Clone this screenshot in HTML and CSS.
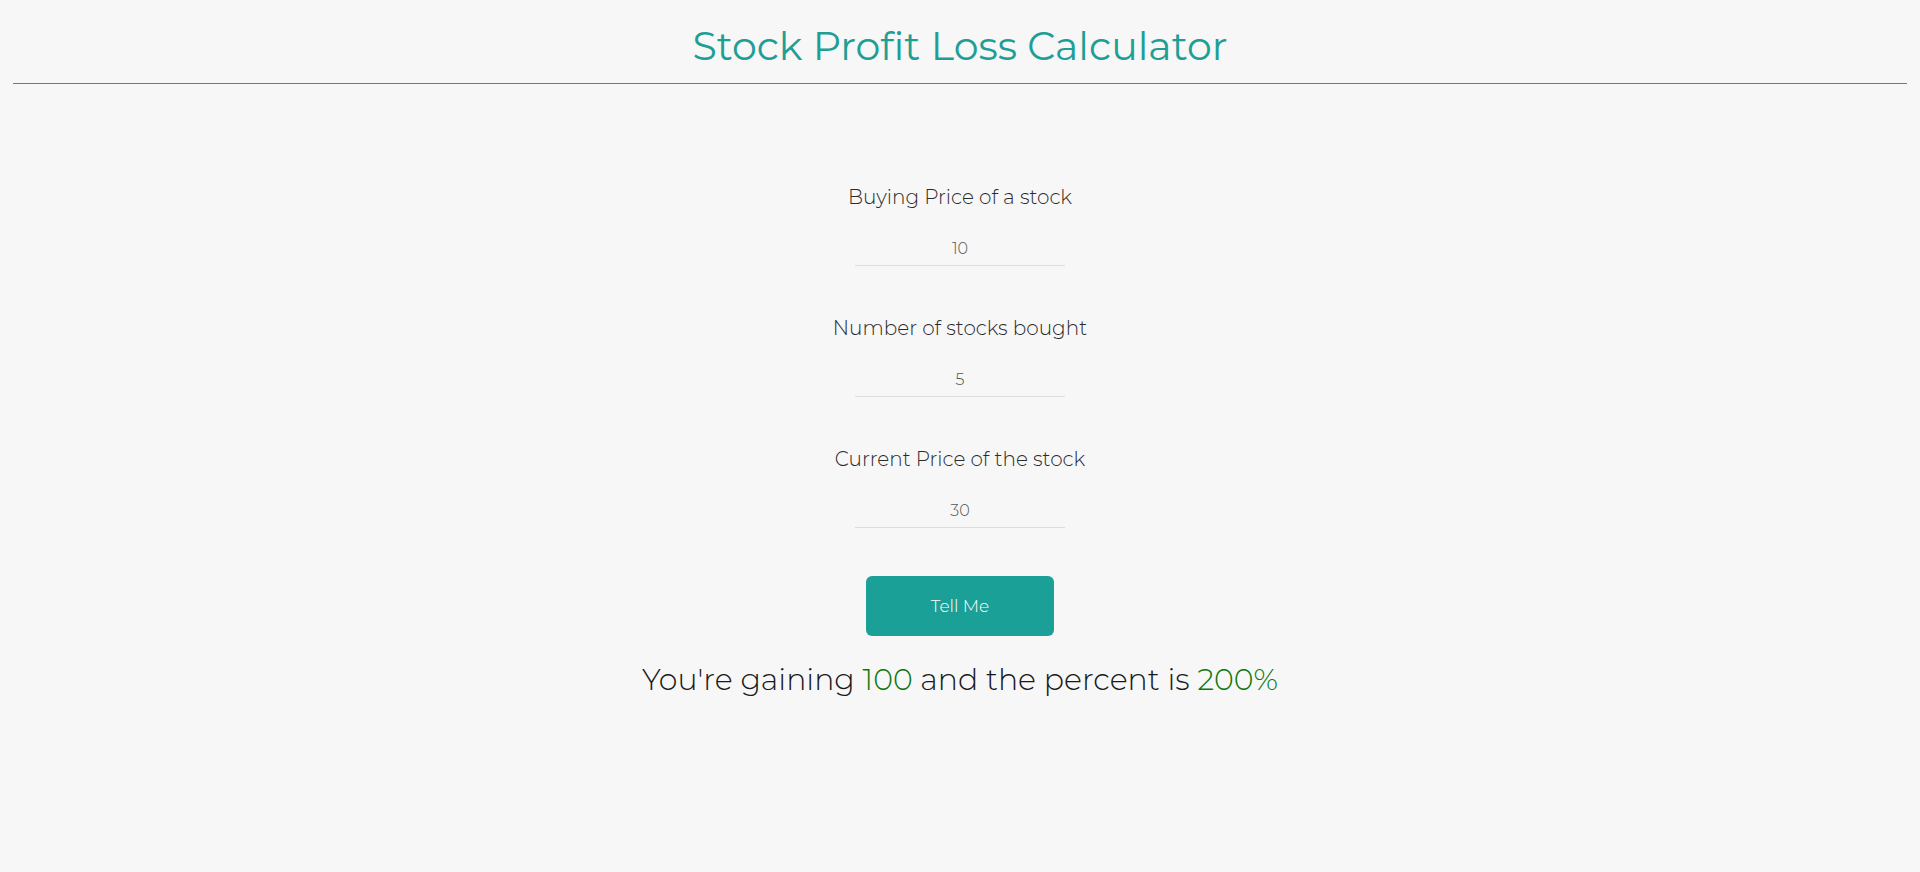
FILE: index.html
```html
<!DOCTYPE html>
<html lang="en">
<head>
<meta charset="utf-8">
<title>Stock Profit Loss Calculator</title>
<link rel="stylesheet" href="styles.css">
</head>
<body>
<header class="header">
  <h1 class="title">Stock Profit Loss Calculator</h1>
</header>
<main class="calc">
  <div class="field">
    <label class="label" for="buy">Buying Price of a stock</label>
    <input class="input" id="buy" type="number" value="10">
  </div>
  <div class="field">
    <label class="label" for="qty">Number of stocks bought</label>
    <input class="input" id="qty" type="number" value="5">
  </div>
  <div class="field">
    <label class="label" for="cur">Current Price of the stock</label>
    <input class="input" id="cur" type="number" value="30">
  </div>
  <button class="btn" type="button">Tell Me</button>
  <p class="output">You're gaining <span class="gain">100</span> and the percent is <span class="gain">200%</span></p>
</main>
</body>
</html>
```
FILE: styles.css
```css
* { box-sizing: border-box; }
body {
  margin: 0;
  background: #f7f7f7;
  font-family: Montserrat, "Open Sans", sans-serif;
  color: #333;
}
.header {
  margin: 0 13px;
  padding: 21px 0 12px;
  border-bottom: 1px solid #1f9e96;
}
.title {
  margin: 0;
  font-size: 39.5px;
  line-height: 50px;
  font-weight: 400;
  color: #1f9e96;
  text-align: center;
}
.calc {
  display: flex;
  flex-direction: column;
  align-items: center;
  padding-top: 100px;
}
.field {
  display: flex;
  flex-direction: column;
  align-items: center;
  margin-bottom: 49px;
}
.label {
  font-size: 20px;
  line-height: 26px;
  font-weight: 300;
  color: #2b2b2b;
}
.input {
  margin-top: 22px;
  width: 210px;
  height: 34px;
  border: none;
  border-bottom: 1px solid #ddd;
  background: transparent;
  text-align: center;
  font-family: inherit;
  font-size: 16px;
  font-weight: 300;
  color: #555;
  outline: none;
  -moz-appearance: textfield;
}
.input::-webkit-outer-spin-button,
.input::-webkit-inner-spin-button { -webkit-appearance: none; margin: 0; }
.btn {
  margin-top: -1px;
  width: 188px;
  height: 60px;
  border: none;
  border-radius: 6px;
  background: #1aa097;
  color: #fff;
  font-family: inherit;
  font-size: 17px;
  font-weight: 300;
}
.output {
  margin: 24px 0 0;
  font-size: 30px;
  line-height: 40px;
  font-weight: 300;
  color: #1a1a1a;
}
.gain { color: #0a780a; font-weight: 300; }
```
